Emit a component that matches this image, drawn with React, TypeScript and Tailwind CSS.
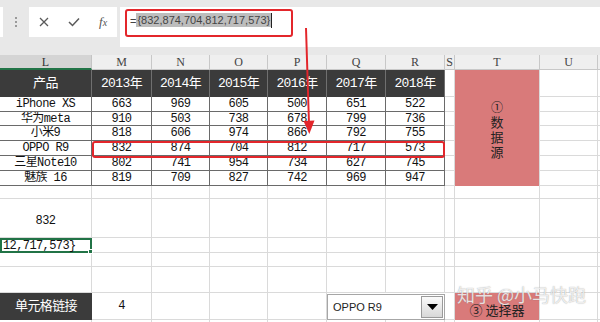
import React from "react";

const cellFont = "font-['Liberation_Mono','Noto_Sans_CJK_SC',monospace] text-[12px] tracking-[-0.6px]";

const rows: (string | number)[][] = [
  ["iPhone XS", 663, 969, 605, 500, 651, 522],
  ["华为meta", 910, 503, 738, 678, 799, 736],
  ["小米9", 818, 606, 974, 866, 792, 755],
  ["OPPO R9", 832, 874, 704, 812, 717, 573],
  ["三星Note10", 802, 741, 954, 734, 627, 745],
  ["魅族 16", 819, 709, 827, 742, 969, 947],
];

const years = ["2013年", "2014年", "2015年", "2016年", "2017年", "2018年"];
const letters = ["M", "N", "O", "P", "Q", "R", "S", "T", "U"];

// plain grid cell
function Cell({ children, className = "" }: { children?: React.ReactNode; className?: string }) {
  return (
    <div className={`flex items-center justify-center overflow-hidden whitespace-nowrap border-r border-b border-[#dadada] text-[#111] ${cellFont} ${className}`}>
      {children}
    </div>
  );
}

function Blank({ n }: { n: number }) {
  return (
    <>
      {Array.from({ length: n }).map((_, i) => (
        <Cell key={i} />
      ))}
    </>
  );
}

export default function App() {
  return (
    <div className="relative w-[600px] h-[322px] overflow-hidden bg-white">
      {/* toolbar + formula bar */}
      <div className="flex h-[55px] bg-[#e8e8e8] pt-[7px]">
        <div className="w-[3px] h-[30px] bg-white" />
        <div className="w-[26px] h-[30px] flex flex-col items-center justify-center gap-[2px]">
          <span className="w-[2px] h-[2px] bg-[#9a9a9a]" />
          <span className="w-[2px] h-[2px] bg-[#9a9a9a]" />
          <span className="w-[2px] h-[2px] bg-[#9a9a9a]" />
        </div>
        <div className="w-[88px] h-[30px] bg-white flex items-center text-[#555]">
          <svg className="ml-[10px]" width="10" height="10" viewBox="0 0 10 10">
            <path d="M1 1 L9 9 M9 1 L1 9" stroke="#5a5a5a" strokeWidth="1.3" />
          </svg>
          <svg className="ml-[19px]" width="12" height="10" viewBox="0 0 12 10">
            <path d="M1 5 L4.5 8.5 L11 1.5" stroke="#5a5a5a" strokeWidth="1.5" fill="none" />
          </svg>
          <span className="ml-[19px] font-['Liberation_Serif',serif] italic text-[13px] text-[#555]">
            f<span className="text-[10px]">x</span>
          </span>
        </div>
        <div className="ml-[3px] flex-1 h-[40px] bg-white pl-[5px] pt-[2px]">
          <div className="w-[168px] h-[28px] rounded-[3px] border-2 border-[#e3262b] flex items-start pt-[2px] pl-[3px] font-['Liberation_Sans',sans-serif] text-[11px] text-[#444]">
            <span>=</span>
            <span className="bg-[#bdbdbd] leading-[14px] px-[1px]">{"{832,874,704,812,717,573}"}</span>
            <span className="w-px h-[15px] bg-[#222]" />
          </div>
        </div>
      </div>

      {/* sheet */}
      <div className="grid grid-cols-[92px_60px_58px_58px_59px_59px_59px_10px_85px_58px_1fr] grid-rows-[15px_27px_15px_14px_15px_15px_15px_15px_13px_39px_15px_14px_26px_27px_10px]">
        {/* column letters */}
        <div className="flex items-center justify-center bg-[#d4d4d4] border-r border-b-2 border-r-[#c4c4c4] border-b-[#217346] font-['Liberation_Serif',serif] text-[12px] text-[#333]">
          L
        </div>
        {letters.map((l) => (
          <div key={l} className="flex items-center justify-center bg-[#efefef] border-r border-b border-[#c8c8c8] font-['Liberation_Serif',serif] text-[12px] text-[#444]">
            {l}
          </div>
        ))}
        <div className="bg-[#efefef] border-b border-[#c8c8c8]" />

        {/* dark header */}
        <div className={`flex items-center justify-center bg-[#3b3b3b] text-white border-r border-[#707070] ${cellFont} text-[13px]`}>产品</div>
        {years.map((y) => (
          <div key={y} className={`flex items-center justify-center bg-[#3b3b3b] text-white border-r border-[#707070] ${cellFont} text-[13px]`}>
            {y}
          </div>
        ))}
        <Cell />
        <div className="row-span-7 bg-[#d97a7a] border-r border-[#dadada] flex flex-col items-center justify-center font-['Noto_Sans_CJK_SC',sans-serif] text-[13px] leading-[15px] text-[#222] pt-[2px]">
          <span className="block h-[15px] leading-[15px] text-[12px]">①</span>
          <span className="block h-[15px] leading-[15px]">数</span>
          <span className="block h-[15px] leading-[15px]">据</span>
          <span className="block h-[15px] leading-[15px]">源</span>
        </div>
        <Cell />
        <Cell className="border-r-0" />

        {/* data rows */}
        {rows.map((r, i) => (
          <React.Fragment key={i}>
            {r.map((v, j) => (
              <div
                key={j}
                className={`flex items-center justify-center whitespace-nowrap overflow-hidden border-r border-b border-[#6a6a6a] text-[#111] ${cellFont}`}
              >
                {v}
              </div>
            ))}
            <Cell />
            <Cell />
            <Cell className="border-r-0" />
          </React.Fragment>
        ))}

        {/* empty row */}
        <Blank n={10} />
        <Cell className="border-r-0" />

        {/* 832 row */}
        <Cell className="pt-[5px]">832</Cell>
        <Blank n={9} />
        <Cell className="border-r-0" />

        {/* selected cell row */}
        <div className={`relative flex items-center justify-start pl-[1px] border-2 border-[#217346] text-[#111] whitespace-nowrap ${cellFont}`}>
          {"12,717,573}"}
          <span className="absolute -right-[3px] -bottom-[3px] w-[5px] h-[5px] bg-[#217346] border border-white" />
        </div>
        <Blank n={9} />
        <Cell className="border-r-0" />

        <Blank n={10} />
        <Cell className="border-r-0" />
        <Blank n={10} />
        <Cell className="border-r-0" />

        {/* bottom row */}
        <div className={`flex items-center justify-center bg-[#3b3b3b] text-white ${cellFont} text-[13px]`}>单元格链接</div>
        <Cell>4</Cell>
        <Cell />
        <Cell />
        <Cell />
        <div className="col-span-2 border-b border-[#dadada] pt-[1px]">
          <div className="h-[26px] bg-white border border-[#a6a6a6] flex items-center justify-between">
            <span className="pl-[5px] font-['Liberation_Sans',sans-serif] text-[11px] text-[#222]">OPPO R9</span>
            <span className="mr-[1px] w-[22px] h-[22px] border border-[#9a9a9a] bg-gradient-to-b from-[#fafafa] to-[#d8d8d8] flex items-center justify-center">
              <svg width="11" height="6" viewBox="0 0 11 6">
                <path d="M0 0 H11 L5.5 6 Z" fill="#000" />
              </svg>
            </span>
          </div>
        </div>
        <Cell />
        <div className="bg-[#d97a7a] flex items-center justify-center pt-[6px] font-['Noto_Sans_CJK_SC',sans-serif] text-[13px] text-[#222] border-r border-[#dadada]">
          ③ 选择器
        </div>
        <Cell />
        <Cell className="border-r-0" />

        <Blank n={10} />
        <Cell className="border-r-0" />
      </div>

      {/* annotations */}
      <div className="absolute left-[92px] top-[141px] w-[353px] h-[17px] rounded-[3px] border-2 border-[#e3262b]" />
      <svg className="absolute left-0 top-0 pointer-events-none" width="600" height="322">
        <line x1="306" y1="28" x2="309" y2="124" stroke="#e3262b" strokeWidth="2" />
        <path d="M303.5 121 L314.5 120.6 L309.3 134 Z" fill="#e3262b" />
      </svg>
      <div className="absolute left-[457px] top-[282px] font-['Noto_Sans_CJK_SC',sans-serif] text-[18px] leading-[24px] text-white/80 whitespace-nowrap [text-shadow:0_0_1px_rgba(80,80,80,0.6)]">
        知乎 @小马快跑
      </div>
    </div>
  );
}
